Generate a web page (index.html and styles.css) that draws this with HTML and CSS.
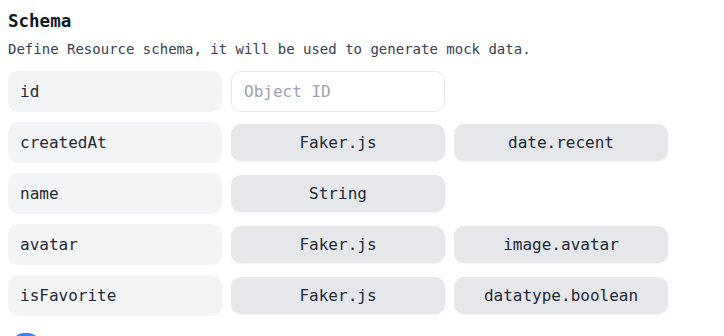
FILE: index.html
```html
<!DOCTYPE html>
<html>
   <head>
      <meta charset="UTF-8">
      <title>Schema</title>
      <link rel="stylesheet" href="styles.css">
   </head>
   <body>
      <div class="schema">
         <h2 class="schema-title">Schema</h2>
         <p class="schema-desc">Define Resource schema, it will be used to generate mock data.</p>
         <div class="schema-grid">
            <div class="field-name">id</div>
            <input type="text" class="field-input" placeholder="Object ID">
            <div></div>

            <div class="field-name">createdAt</div>
            <button type="button" class="field-btn">Faker.js</button>
            <button type="button" class="field-btn">date.recent</button>

            <div class="field-name">name</div>
            <button type="button" class="field-btn">String</button>
            <div></div>

            <div class="field-name">avatar</div>
            <button type="button" class="field-btn">Faker.js</button>
            <button type="button" class="field-btn">image.avatar</button>

            <div class="field-name">isFavorite</div>
            <button type="button" class="field-btn">Faker.js</button>
            <button type="button" class="field-btn">datatype.boolean</button>
         </div>
         <div class="add-btn"></div>
      </div>
   </body>
</html>
```

FILE: styles.css
```css
* {
box-sizing: border-box;
}
body {
margin: 8px;
font-family: "DejaVu Sans Mono", "Liberation Mono", monospace;
color: #1f2937;
background-color: #fff;
}
.schema-title {
margin: 0;
font-size: 17.5px;
font-weight: 600;
line-height: 26px;
color: #111827;
}
.schema-desc {
margin: 5px 0 12px;
font-size: 14px;
line-height: 20px;
color: #374151;
}
.schema-grid {
display: grid;
grid-template-columns: 214px 214px 214px;
grid-auto-rows: 41px;
column-gap: 9px;
row-gap: 10px;
}
.field-name {
display: flex;
align-items: center;
padding-left: 12px;
background-color: #f3f4f6;
border-radius: 10px;
font-size: 16px;
}
.field-input {
font-family: inherit;
font-size: 16px;
padding: 0 12px;
background-color: #fff;
border: 1px solid #e5e7eb;
border-radius: 10px;
color: #1f2937;
}
.field-input::placeholder {
color: #9ca3af;
}
.field-btn {
align-self: center;
height: 37px;
font-family: inherit;
font-size: 16px;
color: #1f2937;
background-color: #e5e7eb;
border: none;
border-radius: 10px;
box-shadow: 0 1px 2px rgba(0, 0, 0, 0.06);
}
.add-btn {
margin: 17px 0 0 4px;
width: 28px;
height: 24px;
border-radius: 12px;
background-color: #3b82f6;
}
```
